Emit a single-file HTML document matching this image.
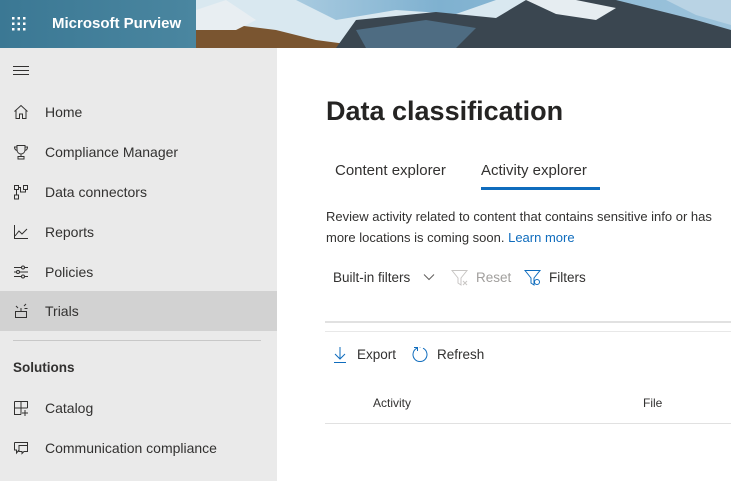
<!DOCTYPE html>
<html><head><meta charset="utf-8"><style>
*{margin:0;padding:0;box-sizing:border-box}
body{width:731px;height:481px;overflow:hidden;font-family:"Liberation Sans",sans-serif;color:#323130;background:#fff;position:relative}
.hdr{position:absolute;left:0;top:0;width:731px;height:48px;background:linear-gradient(90deg,#8fb6d2 0%,#a9cbe0 40%,#7fb1d0 60%,#9ec4dc 100%);overflow:hidden}
.hdr .l{position:absolute;left:0;top:0;width:196px;height:48px;background:linear-gradient(90deg,#3b7894,#4a86a0)}
.hdr .t{position:absolute;left:52px;top:15px;color:#fff;font-weight:bold;font-size:15px}
.side{position:absolute;left:0;top:48px;width:277px;height:433px;background:#eaeaea}
.it{position:absolute;left:0;width:277px;height:40px;font-size:14px;line-height:41px;padding-left:45px}
.it svg{position:absolute;left:13px;top:12px}
.a{position:absolute;font-size:14px;white-space:nowrap}
</style></head><body>
<div class="hdr">
<svg style="position:absolute;left:196px;top:0" width="535" height="48"><polygon points="0,0 100,0 140,20 200,10 260,14 300,0 330,0 330,48 0,48" fill="#d9e8f0"/><polygon points="0,48 0,20 40,25 80,30 120,40 180,48" fill="#7a5530"/><polygon points="0,10 30,0 60,20 40,30 0,30" fill="#e8eef2"/><polygon points="140,48 160,20 240,12 300,18 330,0 420,0 500,20 535,30 535,48" fill="#3a4650"/><polygon points="330,0 380,0 420,8 400,20 360,14" fill="#e6edf1"/><polygon points="470,0 535,0 535,25 500,15" fill="#b9d3e4"/><polygon points="160,30 230,20 280,28 260,48 170,48" fill="#4e6c82"/></svg>
<div class="l"></div>
<svg style="position:absolute;left:12px;top:17px" width="14" height="14" fill="#fff"><g><rect x="0" y="0" width="2.5" height="2.5"/><rect x="5.5" y="0" width="2.5" height="2.5"/><rect x="11" y="0" width="2.5" height="2.5"/><rect x="0" y="5.5" width="2.5" height="2.5"/><rect x="5.5" y="5.5" width="2.5" height="2.5"/><rect x="11" y="5.5" width="2.5" height="2.5"/><rect x="0" y="11" width="2.5" height="2.5"/><rect x="5.5" y="11" width="2.5" height="2.5"/><rect x="11" y="11" width="2.5" height="2.5"/></g></svg>
<div class="t">Microsoft Purview</div></div>
<div class="side">
<svg style="position:absolute;left:13px;top:18px" width="16" height="10" stroke="#323130" stroke-width="1"><path d="M0 .5H16M0 4.5H16M0 8.5H16"/></svg>
<div class="it" style="top:44px"><svg width="16" height="16" fill="none" stroke="#323130"><path d="M1.5 7.5L8 1.5l6.5 6M3 6.5V14.5H6.5V10H9.5V14.5H13V6.5"/></svg>Home</div>
<div class="it" style="top:84px"><svg width="16" height="16" fill="none" stroke="#323130"><path d="M4 1.5H12V6A4 4 0 0 1 4 6ZM4 3H1.5Q1.5 6 4 6.5M12 3H14.5Q14.5 6 12 6.5M8 10V12.5M5 12.5H11V15H5Z"/></svg>Compliance Manager</div>
<div class="it" style="top:124px"><svg width="16" height="16" fill="none" stroke="#323130"><path d="M1.5 1.5H5.5V5.5H1.5ZM10.5 1.5H14.5V5.5H10.5ZM1.5 11H5.5V15H1.5ZM3.5 5.5V11M5.5 3.5H7.5V8H12.5V5.5"/></svg>Data connectors</div>
<div class="it" style="top:164px"><svg width="16" height="16" fill="none" stroke="#323130"><path d="M1.5 1V14.5H15M2 12L6 7l3 3 5-5"/></svg>Reports</div>
<div class="it" style="top:204px"><svg width="16" height="16" fill="none" stroke="#323130"><path d="M1 3.5H15M1 8H15M1 12.5H15"/><circle cx="10" cy="3.5" r="1.5" fill="#eaeaea"/><circle cx="5" cy="8" r="1.5" fill="#eaeaea"/><circle cx="10" cy="12.5" r="1.5" fill="#eaeaea"/></svg>Policies</div>
<div class="it" style="top:243px;background:#d2d2d2"><svg width="16" height="16" fill="none" stroke="#323130"><path d="M2.5 8.5H13.5V14.5H2.5ZM8 8.5V5M3 3L5 5M11 3l2-2M11.5 5.5h3"/></svg>Trials</div>
<div style="position:absolute;left:13px;top:292px;width:248px;height:1px;background:#c8c8c8"></div>
<div class="a" style="left:13px;top:312px;font-weight:bold;font-size:13.5px">Solutions</div>
<div class="it" style="top:340px"><svg width="16" height="16" fill="none" stroke="#323130"><path d="M1.5 1.5H14.5V8M1.5 1.5V14.5H8M1.5 8H14.5M8 1.5V14.5M12 10V16M9 13H15"/></svg>Catalog</div>
<div class="it" style="top:380px"><svg width="16" height="16" fill="none" stroke="#323130"><path d="M1.5 2.5H14.5V5M1.5 2.5V10H3.5V13L6 10M6 5.5H14.5V11.5H11L9 13.5V11.5H6Z"/></svg>Communication compliance</div>
</div>
<div class="a" style="left:326px;top:96px;font-size:27px;font-weight:bold;color:#252423">Data classification</div>
<div class="a" style="left:335px;top:162px;font-size:15px">Content explorer</div>
<div class="a" style="left:481px;top:162px;font-size:15px">Activity explorer</div>
<div style="position:absolute;left:481px;top:187px;width:119px;height:3px;background:#0f6cbd"></div>
<div class="a" style="left:326px;top:209px;font-size:13px">Review activity related to content that contains sensitive info or has</div>
<div class="a" style="left:326px;top:230px;font-size:13px">more locations is coming soon. <span style="color:#0f6cbd">Learn more</span></div>
<div class="a" style="left:333px;top:270px;font-size:13.5px">Built-in filters</div>
<svg style="position:absolute;left:423px;top:273px" width="12" height="8" fill="none" stroke="#605e5c"><path d="M1 1.5l5 5 5-5"/></svg>
<svg style="position:absolute;left:451px;top:269px" width="18" height="18" fill="none" stroke="#c8c6c4"><path d="M1 1.5H16L10 9V16L7 14V9Z M12 12l4 4M16 12l-4 4"/></svg>
<div class="a" style="left:476px;top:270px;font-size:13.5px;color:#a19f9d">Reset</div>
<svg style="position:absolute;left:524px;top:269px" width="18" height="18" fill="none" stroke="#0f6cbd"><path d="M1 1.5H16L10 9V16L7 14V9Z"/><circle cx="13" cy="13" r="2.5"/></svg>
<div class="a" style="left:549px;top:270px;font-size:13.5px">Filters</div>
<div style="position:absolute;left:325px;top:321px;width:406px;height:2px;background:#e1e1e1"></div>
<div style="position:absolute;left:325px;top:331px;width:406px;height:1px;background:#e8e8e8"></div>
<svg style="position:absolute;left:333px;top:347px" width="14" height="16" fill="none" stroke="#0f6cbd"><path d="M7 0V12M2 7l5 5 5-5M1 15.5H13"/></svg>
<div class="a" style="left:357px;top:347px;font-size:13.5px">Export</div>
<svg style="position:absolute;left:411px;top:346px" width="18" height="18" fill="none" stroke="#0f6cbd"><path d="M6 2.2A7 7 0 1 0 12 2.2M9 1.5V1"/><path d="M3 1.5H6.5V5"/></svg>
<div class="a" style="left:437px;top:347px;font-size:13.5px">Refresh</div>
<div class="a" style="left:373px;top:396px;font-size:12px;color:#323130">Activity</div>
<div class="a" style="left:643px;top:396px;font-size:12px;color:#323130">File</div>
<div style="position:absolute;left:325px;top:423px;width:406px;height:1px;background:#e1e1e1"></div>
</body></html>
